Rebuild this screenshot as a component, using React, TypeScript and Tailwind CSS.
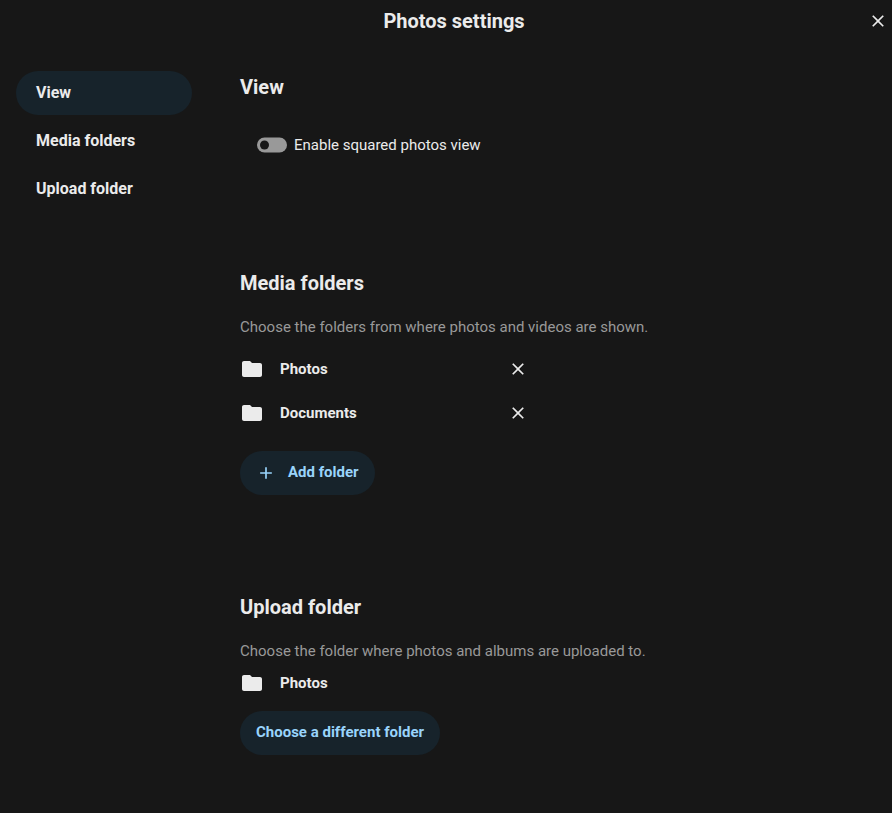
import { useState } from 'react'

type Section = { id: string; title: string }

const sections: Section[] = [
  { id: 'view', title: 'View' },
  { id: 'media-folders', title: 'Media folders' },
  { id: 'upload-folder', title: 'Upload folder' },
]

function CloseIcon() {
  return (
    <svg viewBox="0 0 24 24" className="size-5" fill="currentColor" aria-hidden="true">
      <path d="M19 6.41L17.59 5 12 10.59 6.41 5 5 6.41 10.59 12 5 17.59 6.41 19 12 13.41 17.59 19 19 17.59 13.41 12z" />
    </svg>
  )
}

function PlusIcon() {
  return (
    <svg viewBox="0 0 24 24" className="size-5" fill="currentColor" aria-hidden="true">
      <path d="M19 13h-6v6h-2v-6H5v-2h6V5h2v6h6v2z" />
    </svg>
  )
}

function FolderIcon() {
  return (
    <svg viewBox="0 0 24 24" className="size-6 shrink-0" fill="currentColor" aria-hidden="true">
      <path d="M10 4H4c-1.1 0-2 .9-2 2v12c0 1.1.9 2 2 2h16c1.1 0 2-.9 2-2V8c0-1.1-.9-2-2-2h-8l-2-2z" />
    </svg>
  )
}

function FolderRow({ name, onRemove }: { name: string; onRemove?: () => void }) {
  return (
    <li className="flex min-h-10 max-w-[300px] items-center">
      <FolderIcon />
      <span className="ml-4 flex-1 font-bold">{name}</span>
      {onRemove && (
        <button
          type="button"
          aria-label={`Remove ${name}`}
          onClick={onRemove}
          className="flex size-11 items-center justify-center rounded-full"
        >
          <CloseIcon />
        </button>
      )}
    </li>
  )
}

export default function App() {
  const [squared, setSquared] = useState(false)
  const [active, setActive] = useState('view')
  const [folders, setFolders] = useState(['Photos', 'Documents'])

  return (
    <div className="min-h-screen bg-[#171717] font-[Roboto,sans-serif] text-[15px] leading-6 text-[#ebebeb]">
      <header className="flex h-[42px] items-center">
        <h1 className="flex-1 pl-[52px] text-center text-xl font-bold">Photos settings</h1>
        <button type="button" aria-label="Close" className="-mr-2 flex size-11 items-center justify-center">
          <CloseIcon />
        </button>
      </header>

      <div className="flex">
        <nav className="w-[208px] shrink-0 px-4 pt-[29px]">
          <ul className="flex flex-col gap-1">
            {sections.map(({ id, title }) => (
              <li key={id}>
                <a
                  href={`#${id}`}
                  onClick={() => setActive(id)}
                  className={`flex h-11 items-center rounded-full px-5 text-base font-bold ${
                    active === id ? 'bg-[#17232b]' : ''
                  }`}
                >
                  {title}
                </a>
              </li>
            ))}
          </ul>
        </nav>

        <main className="min-w-0 flex-1 px-8 pt-[30px]">
          <section id="view" className="mb-[97px]">
            <h2 className="mb-[17px] text-xl leading-[30px] font-bold">View</h2>
            <label className="ml-4 flex h-[52px] items-center">
              <input
                type="checkbox"
                checked={squared}
                onChange={(e) => setSquared(e.target.checked)}
                className="peer sr-only"
              />
              <svg
                viewBox="0 0 32 16"
                className="mr-1.5 h-4 w-8 text-[#999999] peer-checked:-scale-x-100 peer-checked:text-[#99d4fb]"
                aria-hidden="true"
              >
                <rect x="1" y="0.5" width="30" height="15" rx="7.5" fill="currentColor" />
                <circle cx="8.5" cy="8" r="4.5" fill="#171717" />
              </svg>
              Enable squared photos view
            </label>
          </section>

          <section id="media-folders" className="mb-[97px]">
            <h2 className="mb-[17px] text-xl leading-[30px] font-bold">Media folders</h2>
            <p className="mb-2 text-[#999999]">Choose the folders from where photos and videos are shown.</p>
            <ul className="mb-4">
              {folders.map((name) => (
                <FolderRow
                  key={name}
                  name={name}
                  onRemove={() => setFolders(folders.filter((f) => f !== name))}
                />
              ))}
            </ul>
            <button
              type="button"
              className="flex h-11 items-center gap-3 rounded-full bg-[#17232b] px-4 font-bold text-[#99d4fb]"
            >
              <PlusIcon />
              <span className="pb-0.5">Add folder</span>
            </button>
          </section>

          <section id="upload-folder">
            <h2 className="mb-[17px] text-xl leading-[30px] font-bold">Upload folder</h2>
            <p className="text-[#999999]">Choose the folder where photos and albums are uploaded to.</p>
            <ul className="mb-2">
              <FolderRow name="Photos" />
            </ul>
            <button type="button" className="h-11 rounded-full bg-[#17232b] px-4 pb-0.5 font-bold text-[#99d4fb]">
              Choose a different folder
            </button>
          </section>
        </main>
      </div>
    </div>
  )
}
